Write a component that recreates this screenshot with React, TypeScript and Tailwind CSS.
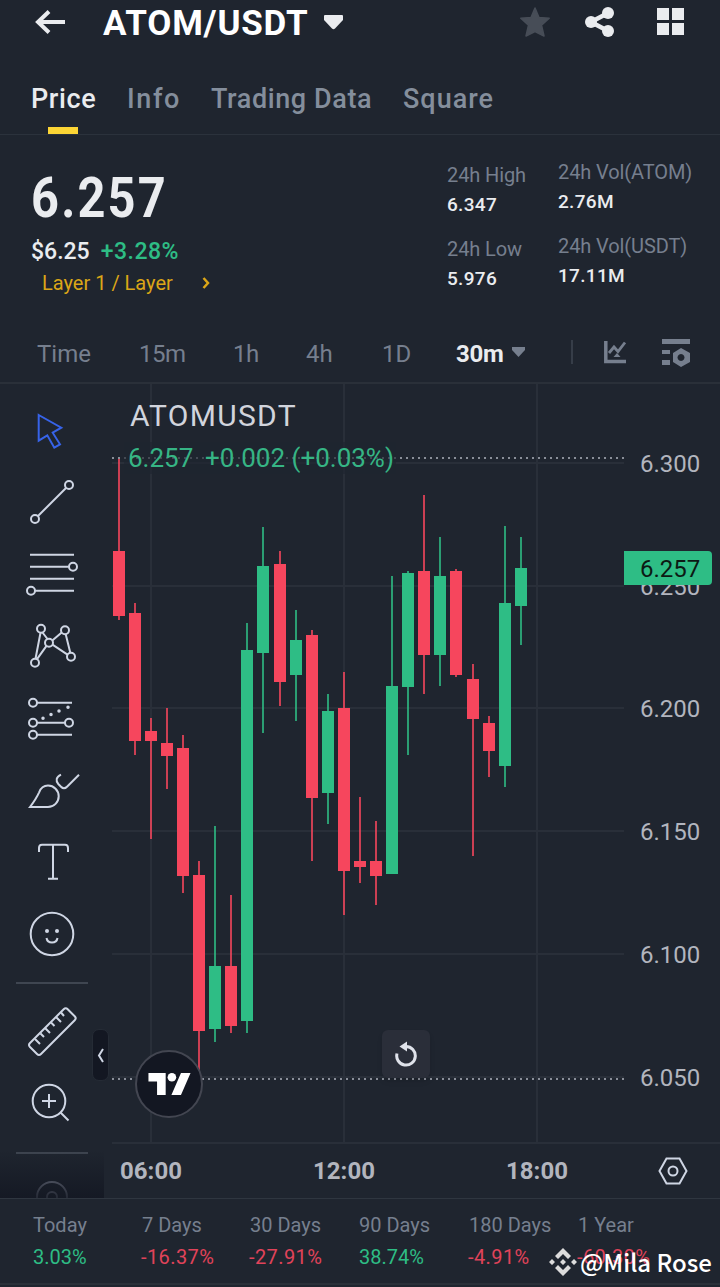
import type { ReactNode } from "react";

type Candle = [x: number, high: number, top: number, bottom: number, low: number, up: boolean];

const UP = "#2ebd85";
const DOWN = "#f6465d";

// y values are relative to the top of the chart pane
const candles: Candle[] = [
  [119, 75, 167, 232, 236, false],
  [135, 219, 229, 357, 371, false],
  [151, 334, 347, 357, 455, false],
  [167, 324, 359, 372, 405, false],
  [183, 351, 364, 492, 509, false],
  [199, 477, 491, 647, 690, false],
  [215, 442, 582, 645, 658, true],
  [231, 511, 582, 642, 649, false],
  [247, 239, 266, 637, 649, true],
  [263, 143, 182, 269, 349, true],
  [280, 167, 180, 298, 322, false],
  [296, 226, 256, 291, 337, true],
  [312, 246, 251, 414, 477, false],
  [328, 310, 327, 409, 440, true],
  [344, 288, 324, 487, 531, false],
  [360, 413, 477, 483, 499, false],
  [376, 437, 477, 492, 521, false],
  [392, 192, 302, 490, 490, true],
  [408, 187, 189, 303, 371, true],
  [424, 111, 187, 271, 310, false],
  [440, 153, 192, 271, 302, true],
  [456, 185, 187, 291, 293, false],
  [473, 280, 295, 335, 472, false],
  [489, 332, 339, 367, 393, false],
  [505, 142, 219, 382, 403, true],
  [521, 153, 184, 222, 261, true],
];

const prices = [
  { label: "6.300", y: 79 },
  { label: "6.250", y: 202 },
  { label: "6.200", y: 324 },
  { label: "6.150", y: 447 },
  { label: "6.100", y: 570 },
  { label: "6.050", y: 693 },
];

const times = [
  { label: "06:00", x: 151 },
  { label: "12:00", x: 344 },
  { label: "18:00", x: 537 },
];

const periods = [
  { label: "Today", value: "3.03%", up: true },
  { label: "7 Days", value: "-16.37%", up: false },
  { label: "30 Days", value: "-27.91%", up: false },
  { label: "90 Days", value: "38.74%", up: true },
  { label: "180 Days", value: "-4.91%", up: false },
  { label: "1 Year", value: "-60.30%", up: false },
];

function Tool({ children, color = "#cfd6e4" }: { children: ReactNode; color?: string }) {
  return (
    <svg width="104" height="72" viewBox="0 0 104 72" fill="none" stroke={color} strokeWidth="2" className="shrink-0">
      {children}
    </svg>
  );
}

function Header() {
  return (
    <header className="flex h-[45px] items-center text-white">
      <svg width="30" height="24" viewBox="0 0 30 24" fill="none" stroke="#eaecef" strokeWidth="4" className="ml-[35px] -mt-[2px]">
        <path d="M30 12H3M14 1.5 3 12l11 10.500" />
      </svg>
      <h1 className="ml-[38px] mt-[3px] w-[206px] text-[35px] leading-[42px] font-bold tracking-[0.8px] whitespace-nowrap">ATOM/USDT</h1>
      <svg width="19" height="15" viewBox="0 0 19 15" fill="#eaecef" className="ml-[15px]">
        <path d="M1 0h17q1 0 1 1v4L11 13.500q-1.500 1.500-3 0L0 5V1q0-1 1-1z" />
      </svg>
      <svg width="30" height="30" viewBox="0 0 30 30" fill="#474d57" stroke="#474d57" strokeWidth="1.500" strokeLinejoin="round" className="ml-[177px] -mt-[2px]">
        <path d="m15 1 4 9.500 10.200.8-7.700 6.800L24 29l-9-4.500L6 29l2.500-10.900L.8 11.300 11 10.500z" />
      </svg>
      <svg width="30" height="32" viewBox="0 0 30 32" fill="#eaecef" stroke="#eaecef" strokeWidth="4.500" className="ml-[35px] -mt-[2px]">
        <path d="M23 7 6 16l17 9" fill="none" />
        <circle cx="23" cy="7" r="6" stroke="none" />
        <circle cx="6" cy="16" r="6" stroke="none" />
        <circle cx="23" cy="25" r="6" stroke="none" />
      </svg>
      <div className="ml-[42px] -mt-[2px] grid grid-cols-[12px_12px] gap-[3px]">
        <span className="h-[12px] bg-[#eaecef]" />
        <span className="h-[12px] bg-[#eaecef]" />
        <span className="h-[12px] bg-[#eaecef]" />
        <span className="h-[12px] bg-[#eaecef]" />
      </div>
    </header>
  );
}

function Tabs() {
  return (
    <nav className="grid h-[90px] grid-cols-[96px_84px_192px_1fr] border-b border-[#2b323c] pl-[31px] pt-[35px] text-[27px] leading-[38px] font-medium tracking-[0.6px] whitespace-nowrap text-[#848e9c]">
      <div className="text-[#eaecef]">
        <span>Price</span>
        <div className="ml-[17px] mt-[9px] h-[7px] w-[30px] bg-[#fcd535]" />
      </div>
      <span className="tracking-[1.6px]">Info</span>
      <span>Trading Data</span>
      <span className="tracking-[1px]">Square</span>
    </nav>
  );
}

function Stat({ label, value }: { label: string; value: string }) {
  return (
    <div className="h-[74px] whitespace-nowrap">
      <div className="text-[20px] leading-[28px] tracking-[-0.1px] text-[#767f8e]">{label}</div>
      <div className="text-[19px] leading-[31px] font-medium tracking-[0.3px] text-[#eaecef]">{value}</div>
    </div>
  );
}

function Summary() {
  return (
    <section className="flex h-[187px]">
      <div className="w-[447px] pl-[31px] pt-[31px] whitespace-nowrap">
        <div className="w-fit origin-left scale-x-[0.870] text-[56px] leading-[64px] font-bold tracking-[2.500px] text-[#eaecef]">6.257</div>
        <div className="mt-[5px] flex gap-[11px] text-[23px] leading-[33px] font-medium">
          <span className="text-[#eaecef]">$6.25</span>
          <span className="tracking-[0.500px] text-[#2ebd85]">+3.28%</span>
        </div>
        <div className="ml-[11px] flex items-center text-[20px] leading-[30px] text-[#dba617]">
          <span className="w-[160px]">Layer 1 / Layer</span>
          <svg width="8" height="12" viewBox="0 0 8 12" fill="none" stroke="#dba617" strokeWidth="2.500">
            <path d="m1.500 1 4.500 5-4.500 5" />
          </svg>
        </div>
      </div>
      <div className="w-[111px] pt-[26px]">
        <Stat label="24h High" value="6.347" />
        <Stat label="24h Low" value="5.976" />
      </div>
      <div className="pt-[23px]">
        <Stat label="24h Vol(ATOM)" value="2.76M" />
        <Stat label="24h Vol(USDT)" value="17.11M" />
      </div>
    </section>
  );
}

function Intervals() {
  return (
    <section className="flex h-[62px] items-center border-b-2 border-[#2a3039] text-[24px] leading-[32px] whitespace-nowrap text-[#767f8e]">
      <div className="grid w-[512px] shrink-0 grid-cols-[102px_94px_73px_76px_74px_56px] pl-[37px] pt-[3px]">
        <span>Time</span>
        <span className="tracking-[-0.500px]">15m</span>
        <span className="tracking-[-0.500px]">1h</span>
        <span>4h</span>
        <span>1D</span>
        <span className="font-bold tracking-[-0.300px] text-[#eaecef]">30m</span>
      </div>
      <svg width="13" height="10" viewBox="0 0 13 10" fill="#767f8e">
        <path d="M0 0h13v3L6.500 10 0 3z" />
      </svg>
      <span className="ml-[46px] h-[24px] w-[2px] bg-[#363d48]" />
      <svg width="23" height="24" viewBox="0 0 23 24" fill="none" stroke="#767f8e" strokeWidth="3.500" className="ml-[31px]">
        <path d="M1.800 1v20.500H22" />
        <path d="m5 13 5-6 4 4.500 7-9" strokeWidth="2.800" />
        <path d="m9.500 17 3.500-4 3.500 4z" fill="#767f8e" stroke="none" />
      </svg>
      <svg width="28" height="29" viewBox="0 0 28 29" fill="#767f8e" className="ml-[35px]">
        <path d="M0 1h28v5H0zM0 12h8v4H0zM0 22h8v5H0z" />
        <path fillRule="evenodd" d="m19 10 9 5v9l-9 5-8-5v-9zm0 6a3.500 3.500 0 1 0 .01 0z" />
      </svg>
    </section>
  );
}

function Toolbar() {
  return (
    <aside className="relative flex h-[814px] w-[104px] shrink-0 flex-col overflow-hidden pt-[11px]">
      <Tool color="#3763e8">
        <path d="m38.700 20 22.600 12.700-8.600 5L60 49.300l-5.700 3.400-7-12.400-8.600 5.400z" />
      </Tool>
      <Tool>
        <circle cx="69" cy="18" r="4" />
        <circle cx="35" cy="52" r="4" />
        <path d="m38 49 28-28" />
      </Tool>
      <Tool>
        <path d="M30 15.700h44M30 27.700h39M30 39.700h44M35 51.700h39" />
        <circle cx="73" cy="27.700" r="4" />
        <circle cx="31" cy="51.700" r="4" />
      </Tool>
      <Tool>
        <circle cx="41" cy="17.700" r="4" />
        <circle cx="65" cy="19.300" r="4" />
        <circle cx="49" cy="31.700" r="4" />
        <circle cx="71" cy="45.700" r="4" />
        <circle cx="35" cy="51.700" r="4" />
        <path d="m40.500 21.700-5 26M42.500 21.500l5 6.500M52.300 29.500l9.400-8M65.700 23.300 70.300 41.700M52.500 33.700l15 10M46.500 34.900 37 48.200" />
      </Tool>
      <Tool>
        <circle cx="33" cy="19.700" r="4" />
        <circle cx="33" cy="39.700" r="4" />
        <circle cx="69" cy="39.700" r="4" />
        <circle cx="33" cy="51.700" r="4" />
        <path d="M37 19.700h35M37 39.700h28M37 51.700h35" />
        <path d="M43 35.300h.01M51 31.500h.01M59 28h.01M68 24.300h.01" strokeWidth="3.500" strokeLinecap="round" />
      </Tool>
      <Tool>
        <path d="M30 52h18a10.700 10.700 0 0 0 0-21.400c-5 0-7.500 3-9 7C37 42 34.500 46 30 52z" />
        <path d="M61 19.700c-5 2.300-5.500 6.300-2.700 9.300l2.700 2.700c2 2 4 2 6 0l12-12" />
      </Tool>
      <Tool>
        <path d="M39 25v-4q0-3.300 3-3.300h23q3 0 3 3.300v4M53 17.700v34M48 51.700h10" />
      </Tool>
      <Tool>
        <circle cx="52" cy="35" r="21.300" />
        <circle cx="47" cy="32" r="2" fill="#cfd6e4" stroke="none" />
        <circle cx="57" cy="32" r="2" fill="#cfd6e4" stroke="none" />
        <path d="M46.500 39c1 6 10 6 11 0" />
      </Tool>
      <div className="ml-[16px] mt-[11px] mb-[12px] h-[2px] w-[72px] shrink-0 bg-[#3f4651]" />
      <Tool>
        <path d="M63.700 13.200q2-2 4 0l7 7q2 2 0 4L41 58q-2 2-4 0l-7-7q-2-2 0-4z" />
        <path d="m35 43 5 5M40.500 37.500l3.500 3.500M45 32l5 5M51 26.500l3.500 3.500M56 21l5 5M61 16.500l3 3.500" />
      </Tool>
      <Tool>
        <circle cx="49" cy="33" r="16.300" />
        <path d="M42 33h14M49 26v14M60.500 44.500l8 8" />
      </Tool>
      <div className="ml-[16px] mt-[12px] h-[2px] w-[72px] shrink-0 bg-[#3f4651]" />
      <Tool color="#8a90a0">
        <circle cx="52" cy="43" r="15" />
        <circle cx="52" cy="43" r="5" />
      </Tool>
      <div className="absolute inset-x-0 bottom-0 h-[48px] bg-linear-to-b from-transparent to-[#131722]/85" />
    </aside>
  );
}

function Plot() {
  return (
    <svg width="616" height="814" viewBox="104 0 616 814" className="block shrink-0 font-[Roboto,sans-serif]">
      <g fill="#292f39">
        {times.map((t) => (
          <rect key={t.label} x={t.x - 1} y="0" width="2" height="758" />
        ))}
        {prices.map((p) => (
          <rect key={p.label} x="112" y={p.y - 1} width="512" height="2" />
        ))}
        <rect x="112" y="758" width="608" height="2" />
      </g>
      <path d="M112 74h512M112 695h512" stroke="#8a8f99" strokeWidth="2" strokeDasharray="2 4" />
      {candles.map(([x, high, top, bottom, low, up]) => (
        <g key={x} fill={up ? UP : DOWN}>
          <rect x={x - 1} y={high} width="2" height={low - high} opacity="0.800" />
          <rect x={x - 6} y={top} width="12" height={bottom - top} />
        </g>
      ))}
      <rect x="124" y="58" width="272" height="32" fill="#1f252f" opacity="0.650" />
      <text x="130" y="42" fontSize="30" letterSpacing="1.300" fill="#d1d4dc">ATOMUSDT</text>
      <g fontSize="26" fill="#36b585">
        <text x="128" y="83">6.257</text>
        <text x="205" y="83">+0.002 (+0.03%)</text>
      </g>
      <g fontSize="24" fill="#b2b5be">
        {prices.map((p) => (
          <text key={p.label} x="640" y={p.y + 9}>{p.label}</text>
        ))}
      </g>
      <path d="M624 167h84q4 0 4 4v26q0 4-4 4h-84z" fill={UP} />
      <text x="640" y="193" fontSize="24" fill="#0c1a14">6.257</text>
      <g fontSize="24" fontWeight="700" fill="#b2b5be" textAnchor="middle">
        {times.map((t) => (
          <text key={t.label} x={t.x} y="795">{t.label}</text>
        ))}
      </g>
      <g fill="none" stroke="#cfd6e4" strokeWidth="2">
        <path d="m659.500 787 7-12.500h13l7 12.500-7 12.500h-13z" />
        <circle cx="673" cy="787" r="4.500" />
      </g>
    </svg>
  );
}

function Chart() {
  return (
    <section className="relative flex h-[814px]">
      <Toolbar />
      <Plot />
      <div className="absolute left-[92px] top-[645px] flex h-[52px] w-[17px] items-center justify-center rounded-[7px] border border-[#252b35] bg-[#131722]">
        <svg width="7" height="15" viewBox="0 0 7 15" fill="none" stroke="#cfd6e4" strokeWidth="2">
          <path d="M6 1 2 7.500 6 14" />
        </svg>
      </div>
      <div className="absolute left-[135px] top-[666px] flex h-[68px] w-[68px] items-center justify-center rounded-full border-2 border-[#434651] bg-[#131722]">
        <svg width="43" height="22" viewBox="0 0 44 23" fill="#fff">
          <path d="M0 0h18v23H9V9H0zM34 0h10L34 23H24z" />
          <circle cx="24.500" cy="4.500" r="4.500" />
        </svg>
      </div>
      <div className="absolute left-[382px] top-[646px] flex h-[48px] w-[48px] items-center justify-center rounded-[6px] bg-[#2a2e39] shadow-md">
        <svg width="24" height="26" viewBox="0 0 24 26" fill="none" stroke="#dfe2ea" strokeWidth="3">
          <path d="M3 12.500A9.300 9.300 0 1 0 12 5.500" />
          <path d="m5.500 5.500 7.500-5v10z" fill="#dfe2ea" stroke="none" />
        </svg>
      </div>
    </section>
  );
}

function Periods() {
  return (
    <section className="grid h-[87px] grid-cols-[109px_108px_109px_110px_109px_1fr] border-t border-b-2 border-t-[#2f3640] border-b-[#2a3039] pl-[33px] pt-[12px] text-[20px] whitespace-nowrap">
      {periods.map((p) => (
        <div key={p.label}>
          <div className="leading-[28px] text-[#767f8e]">{p.label}</div>
          <div className={p.up ? "leading-[37px] text-[#2ebd85]" : "-ml-[1px] leading-[37px] tracking-[0.400px] text-[#e0435a]"}>{p.value}</div>
        </div>
      ))}
    </section>
  );
}

export default function App() {
  return (
    <main className="relative h-[1287px] w-[720px] overflow-hidden bg-[#1f252f] font-[Roboto,sans-serif]">
      <Header />
      <Tabs />
      <Summary />
      <Intervals />
      <Chart />
      <Periods />
      <div className="absolute left-[549px] top-[1244px] flex items-center gap-[3px] font-['Noto_Sans_CJK_SC',sans-serif] text-[24px] leading-[36px] font-medium whitespace-nowrap text-white">
        <svg width="28" height="28" viewBox="0 0 28 28" fill="#dcdcdc">
          <path d="m14 0 8 8-3 3-5-5-5 5-3-3zM14 28l8-8-3-3-5 5-5-5-3 3zM14 11l3 3-3 3-3-3zM3 11l3 3-3 3-3-3zM25 11l3 3-3 3-3-3z" />
        </svg>
        <span>@Mila Rose</span>
      </div>
    </main>
  );
}
